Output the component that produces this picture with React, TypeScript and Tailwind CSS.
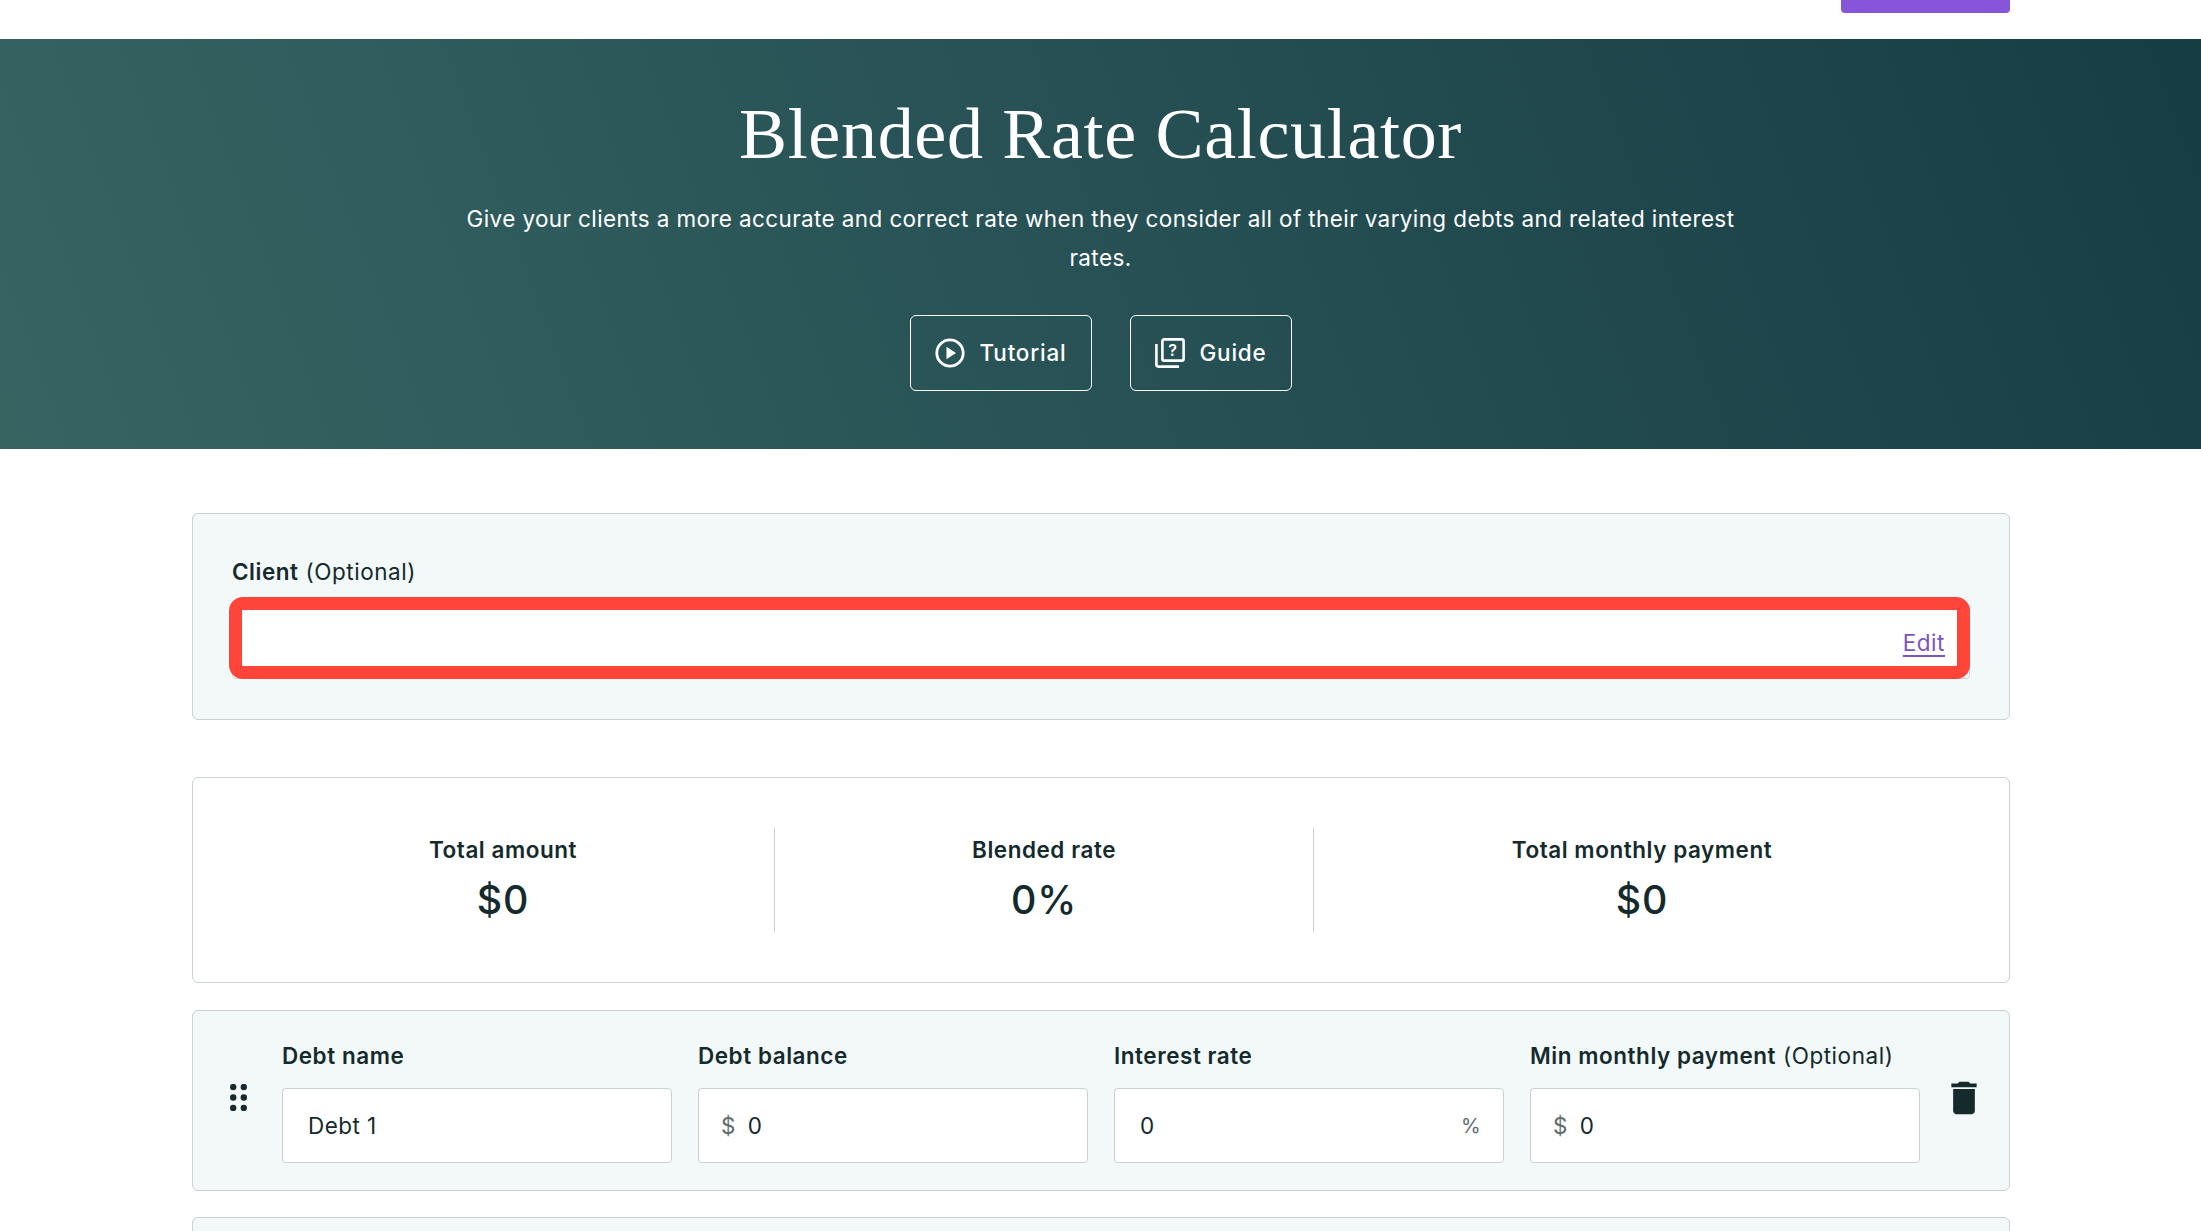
import React from "react";

const ink = "text-[#142a2d]";

function Dots() {
  return (
    <svg width="17" height="27" viewBox="0 0 17 27" className="fill-[#142a2d]">
      {[3, 13.5, 24].map((y) => (
        <g key={y}>
          <circle cx="3.2" cy={y} r="3.2" />
          <circle cx="13.8" cy={y} r="3.2" />
        </g>
      ))}
    </svg>
  );
}

function Field({ label, optional, prefix, suffix, value }: { label: string; optional?: boolean; prefix?: string; suffix?: string; value: string }) {
  return (
    <div className="w-[390px]">
      <div className="h-[33px] text-[22.46px] leading-[33px] tracking-[0.025em] mb-[16px] whitespace-nowrap">
        <span className="font-semibold">{label}</span>
        {optional && <span> (Optional)</span>}
      </div>
      <div className={`h-[75px] bg-white border border-[#c9d1d2] rounded-[4px] flex items-center text-[22.46px] tracking-[0.02em] ${prefix ? "pl-[22px]" : "pl-[25px]"} pr-[22px]`}>
        {prefix && <span className="text-[#5f6b6d] mr-[12px]">{prefix}</span>}
        <span className="flex-1">{value}</span>
        {suffix && <span className="text-[#5f6b6d] text-[20px]">{suffix}</span>}
      </div>
    </div>
  );
}

function Stat({ label, value, divider }: { label: string; value: string; divider?: boolean }) {
  return (
    <div className={`h-[104px] flex flex-col items-center ${divider ? "border-r border-[#c9d1d2]" : ""}`}>
      <div className="text-[22.46px] font-semibold tracking-[0.025em] leading-[33px] mt-[5px]">{label}</div>
      <div className="text-[39.3px] font-medium tracking-[0.02em] leading-[50px] mt-[9px]">{value}</div>
    </div>
  );
}

export default function App() {
  return (
    <div className={`h-[1231px] overflow-hidden bg-white ${ink} font-['Inter',sans-serif]`}>
      <div className="h-[39px] flex justify-end pr-[191px]">
        <div className="w-[169px] h-[13px] bg-[#8655d9] rounded-b-[4px]" />
      </div>

      <header className="h-[410px] bg-[linear-gradient(70deg,#366562,#275155_50%,#163d44)] text-white flex flex-col items-center pt-[52px]">
        <h1 className="font-['Liberation_Serif',serif] text-[72px] leading-[86px] tracking-[0.66px] font-normal">Blended Rate Calculator</h1>
        <p className="w-[1290px] text-center text-[22.46px] leading-[39px] tracking-[0.018em] mt-[22px]">
          Give your clients a more accurate and correct rate when they consider all of their varying debts and related interest rates.
        </p>
        <div className="flex gap-[38px] mt-[38px]">
          <div className="w-[182px] h-[76px] border border-white rounded-[6px] flex items-center justify-center gap-[15px] text-[22.46px] font-medium tracking-[0.035em]">
            <svg width="30" height="30" viewBox="0 0 30 30" fill="none">
              <circle cx="15" cy="15" r="13.2" stroke="white" strokeWidth="2.8" />
              <path d="M11.5 8.8 21 15l-9.5 6.2z" fill="white" />
            </svg>
            Tutorial
          </div>
          <div className="w-[162px] h-[76px] border border-white rounded-[6px] flex items-center justify-center gap-[15px] text-[22.46px] font-medium tracking-[0.035em]">
            <svg width="30" height="30" viewBox="0 0 30 30" fill="none">
              <rect x="7.4" y="1.4" width="21.2" height="21.2" rx="1.6" stroke="white" strokeWidth="2.6" />
              <path d="M1.4 6v20.6c0 1.1.9 2 2 2H24" stroke="white" strokeWidth="2.6" />
              <text x="18" y="17.5" textAnchor="middle" fill="white" fontSize="16" fontWeight="600" fontFamily="Inter, sans-serif">?</text>
            </svg>
            Guide
          </div>
        </div>
      </header>

      <main className="w-[1818px] ml-[192px] pt-[64px]">
        <section className="h-[207px] bg-[#f3f8f8] border border-[#c9d1d2] rounded-[6px] px-[39px] pt-[41px]">
          <div className="text-[22.46px] leading-[33px] tracking-[0.025em]">
            <span className="font-semibold">Client</span> (Optional)
          </div>
          <div className="relative h-[75px] mt-[16px] bg-white border border-[#c9d1d2] rounded-[4px] flex items-center justify-end pr-[24px] pt-[2px]">
            <span className="text-[22.46px] text-[#7c55c0] underline underline-offset-[4px] tracking-[0.025em]">Edit</span>
            <div className="absolute -left-[4px] -top-[8px] -right-[1px] -bottom-[1px] border-[13px] border-[#ff443a] rounded-[14px]" />
          </div>
        </section>

        <section className="mt-[57px] h-[206px] bg-white border border-[#c9d1d2] rounded-[6px] px-[39px] pt-[50px] grid grid-cols-[543px_539px_1fr]">
          <Stat label="Total amount" value="$0" divider />
          <Stat label="Blended rate" value="0%" divider />
          <Stat label="Total monthly payment" value="$0" />
        </section>

        <section className="mt-[27px] h-[181px] bg-[#f3f8f8] border border-[#c9d1d2] rounded-[6px] flex pt-[28px]">
          <div className="w-[89px] pl-[37px] pt-[45px] shrink-0"><Dots /></div>
          <div className="flex gap-[26px]">
            <Field label="Debt name" value="Debt 1" />
            <Field label="Debt balance" prefix="$" value="0" />
            <Field label="Interest rate" suffix="%" value="0" />
            <Field label="Min monthly payment" optional prefix="$" value="0" />
          </div>
          <div className="pl-[30px] pt-[42px]">
            <svg width="28" height="34" viewBox="5 2.6 14 18.8" className="fill-[#142a2d]">
              <path d="M6 19c0 1.1.9 2 2 2h8c1.1 0 2-.9 2-2V7H6v12zM19 4h-3.5l-1-1h-5l-1 1H5v2h14V4z" />
            </svg>
          </div>
        </section>

        <section className="mt-[26px] h-[100px] bg-[#f3f8f8] border border-[#c9d1d2] rounded-[6px]" />
      </main>
    </div>
  );
}
